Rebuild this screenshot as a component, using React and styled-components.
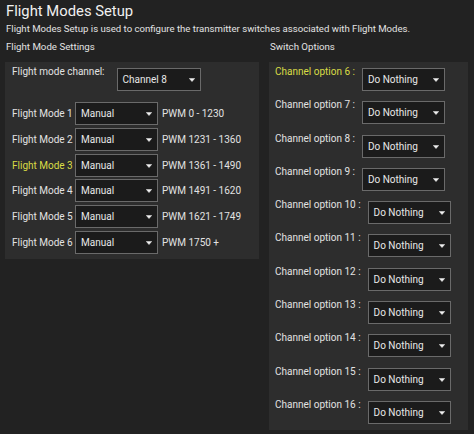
import React from "react";
import styled, { createGlobalStyle } from "styled-components";

const GlobalStyle = createGlobalStyle`
  html, body {
    margin: 0;
    padding: 0;
    background: #222222;
  }
  body {
    font-family: Roboto, "Liberation Sans", sans-serif;
    color: #e4e4e4;
  }
  * { box-sizing: border-box; }
`;

const Page = styled.div`
  min-height: 100vh;
  background: #222222;
  padding: 0 0 0 5px;
`;

const Title = styled.h1`
  margin: 0;
  padding-left: 1px;
  font-size: 14.8px;
  font-weight: 400;
  line-height: 22px;
  color: #f0f0f0;
  white-space: nowrap;
`;

const Subtitle = styled.p`
  margin: 0;
  padding-left: 1px;
  font-size: 9.6px;
  line-height: 14px;
  color: #e2e2e2;
  white-space: nowrap;
`;

const Columns = styled.div`
  display: flex;
  align-items: flex-start;
  gap: 10px;
`;

const Column = styled.section`
  display: flex;
  flex-direction: column;
  width: ${(p) => p.$width}px;
`;

const Heading = styled.h2`
  margin: 0 0 4px;
  padding-left: 1px;
  font-size: 9.7px;
  font-weight: 400;
  line-height: 22px;
  color: #e2e2e2;
  white-space: nowrap;
`;

const Panel = styled.div`
  background: #2d2d2d;
  display: flex;
  flex-direction: column;
  padding: ${(p) => p.$pad};
  gap: ${(p) => p.$gap}px;
`;

const TopRow = styled.div`
  display: flex;
  align-items: flex-start;
  gap: ${(p) => p.$gap}px;
  margin-bottom: ${(p) => p.$after || 0}px;
`;

const TopLabel = styled.span`
  font-size: 10px;
  line-height: 11px;
  margin-top: -2px;
  white-space: nowrap;
  color: ${(p) => (p.$active ? "#d9dc45" : "#e2e2e2")};
`;

const ModeRow = styled.div`
  display: flex;
  align-items: center;
`;

const ModeLabel = styled.span`
  width: 63px;
  font-size: 10px;
  white-space: nowrap;
  color: ${(p) => (p.$active ? "#d9dc45" : "#e2e2e2")};
`;

const Pwm = styled.span`
  margin-left: 4px;
  font-size: 10px;
  white-space: nowrap;
  color: #e2e2e2;
`;

const SelectBox = styled.div`
  flex: none;
  width: ${(p) => p.$width}px;
  height: 23px;
  background: #1b1b1b;
  border: 1px solid #6a6a6a;
  display: flex;
  align-items: center;
  justify-content: space-between;
  padding: 0 5px 0 5px;
  font-size: 10px;
  color: #e8e8e8;
  white-space: nowrap;
`;

const Caret = styled.svg`
  flex: none;
  width: 6px;
  height: 4px;
  margin-top: 1px;
`;

function Select({ value, width = 83 }) {
  return (
    <SelectBox $width={width}>
      <span>{value}</span>
      <Caret viewBox="0 0 6 4">
        <path d="M0.3 0.4 H5.7 L3 3.6 Z" fill="#f2f2f2" stroke="#f2f2f2" strokeWidth="0.5" strokeLinejoin="round" />
      </Caret>
    </SelectBox>
  );
}

const modes = [
  ["Flight Mode 1", "PWM 0 - 1230"],
  ["Flight Mode 2", "PWM 1231 - 1360"],
  ["Flight Mode 3", "PWM 1361 - 1490", true],
  ["Flight Mode 4", "PWM 1491 - 1620"],
  ["Flight Mode 5", "PWM 1621 - 1749"],
  ["Flight Mode 6", "PWM 1750 +"],
];

const options = [6, 7, 8, 9, 10, 11, 12, 13, 14, 15, 16];

export default function App() {
  return (
    <>
      <GlobalStyle />
      <Page>
        <Title>Flight Modes Setup</Title>
        <Subtitle>
          Flight Modes Setup is used to configure the transmitter switches associated with Flight Modes.
        </Subtitle>
        <Columns>
          <Column $width={254}>
            <Heading>Flight Mode Settings</Heading>
            <Panel $pad="6px 7px 5px" $gap={2.8}>
              <TopRow $gap={12} $after={8.2}>
                <TopLabel>Flight mode channel:</TopLabel>
                <Select value="Channel 8" width={84} />
              </TopRow>
              {modes.map(([label, pwm, active]) => (
                <ModeRow key={label}>
                  <ModeLabel $active={active}>{label}</ModeLabel>
                  <Select value="Manual" />
                  <Pwm>{pwm}</Pwm>
                </ModeRow>
              ))}
            </Panel>
          </Column>
          <Column $width={199}>
            <Heading>Switch Options</Heading>
            <Panel $pad="6px 6px 6px" $gap={10.3}>
              {options.map((n) => (
                <TopRow key={n} $gap={7}>
                  <TopLabel $active={n === 6}>Channel option {n} :</TopLabel>
                  <Select value="Do Nothing" />
                </TopRow>
              ))}
            </Panel>
          </Column>
        </Columns>
      </Page>
    </>
  );
}
